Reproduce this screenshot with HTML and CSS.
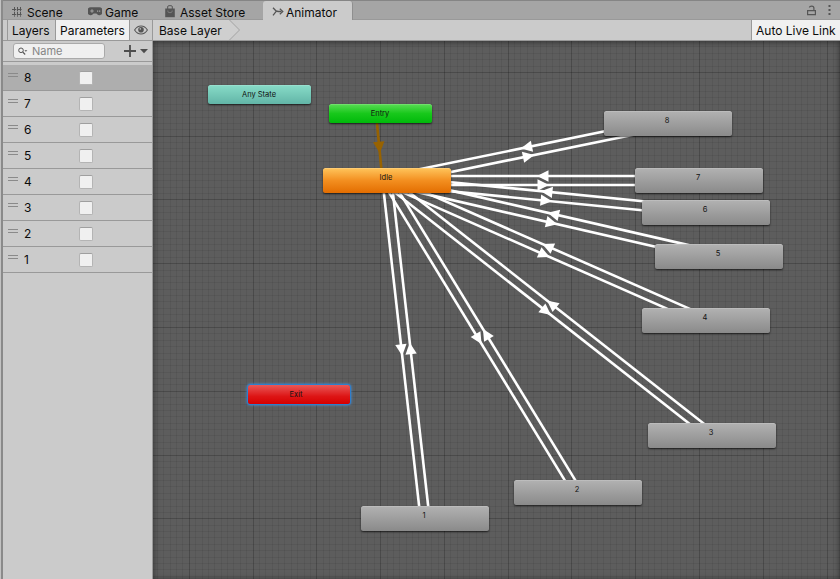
FILE: index.html
```html
<!DOCTYPE html>
<html lang="en">
<head>
<meta charset="utf-8">
<title>Animator</title>
<link rel="stylesheet" href="styles.css">
</head>
<body>
<div class="window">
  <nav class="tabs">
    <div class="tab tab-scene"><svg width="12" height="12" viewBox="0 0 12 12"><path d="M3.500 1v10M6.500 1v10M9.500 1v10M1 3.500h10M1 8.500h10" stroke="#555" stroke-width="1" stroke-dasharray="4 .7" fill="none"/></svg><span>Scene</span></div>
    <div class="tab tab-game"><svg width="14" height="9" viewBox="0 0 14 9"><path fill="#555" fill-rule="evenodd" d="M4 .3h6a4 4 0 0 1 1.500 8C10 8.600 9 7 8.400 6.500H5.600C5 7 4 8.600 2.500 8.300A4 4 0 0 1 4 .3ZM3.500 2.300v1.200H2.300v1h1.200v1.200h1V4.500h1.200v-1H4.500V2.300ZM9 3.500v1.200h1.200V3.500ZM11 3.500v1.200h1.200V3.500Z"/></svg><span>Game</span></div>
    <div class="tab tab-store"><svg width="10" height="13" viewBox="0 0 10 13"><path d="M2.700 4V2q0-1.300 1-1.300h2.600q1 0 1 1.300v2" fill="none" stroke="#555"/><path d="M.2 3.500h9.600V12.200H.2Z" fill="#555"/><path d="M2.800 5.500v.6q0 1.600 2.200 1.600t2.200-1.600v-.6" fill="none" stroke="#888" stroke-width=".8"/></svg><span>Asset Store</span></div>
    <div class="tab tab-animator"><svg width="12" height="10" viewBox="0 0 12 10"><path d="M1 .8 3.600 3.500Q4.700 4.500 6.500 4.500H9.500M1 8.300 4 4.600" fill="none" stroke="#555" stroke-width="1.300"/><path d="M7.800 1.800 10.800 4.500 7.800 7.200" fill="none" stroke="#555" stroke-width="1.200"/></svg><span>Animator</span></div>
    <div class="window-tools">
      <svg width="9" height="11" viewBox="0 0 9 11"><path d="M.6 5.600h7.800v4H.6ZM6.900 5.600V3q0-1.900-2.200-1.900T2.400 2.500" fill="none" stroke="#555" stroke-width="1.200"/></svg>
      <svg width="3" height="12" viewBox="0 0 3 12"><path d="M.5 1h2v2h-2ZM.5 5h2v2h-2ZM.5 9h2v2h-2Z" fill="#555"/></svg>
    </div>
  </nav>
  <div class="toolbar">
    <div class="panel-tabs">
      <div class="layers">Layers</div><div class="parameters">Parameters</div>
      <div class="eye"><svg width="14" height="10" viewBox="0 0 14 10"><path d="M.6 5Q3 1 7 1t6.400 4Q11 9 7 9T.6 5Z" fill="none" stroke="#555" stroke-width="1.100"/><circle cx="7" cy="4.700" r="2.800" fill="#555"/><circle cx="6.300" cy="3.900" r=".8" fill="#bbb"/></svg></div>
    </div>
    <div class="breadcrumb"><span>Base Layer</span><svg width="13" height="20" viewBox="0 0 13 20"><path d="M0 0h1l10 10L1 20H0Z" fill="#cfcfcf"/><path d="M.5 0 10.500 10 .5 20" fill="none" stroke="#a2a2a2"/></svg></div>
    <div class="live-link">Auto Live Link</div>
  </div>
  <main class="workspace">
    <aside class="sidebar">
      <div class="search-row">
        <div class="search"><svg width="10" height="9" viewBox="0 0 10 9"><circle cx="3" cy="3.300" r="2.300" fill="none" stroke="#555"/><path d="m4.700 5 2.500 2.500" stroke="#555" stroke-width="1.100"/><path d="M6.400 3.200h3L7.900 4.800Z" fill="#555"/></svg><span>Name</span></div>
        <svg class="add" width="26" height="12" viewBox="0 0 26 12"><path d="M6 0v12M0 6h12" stroke="#4d4d4d" stroke-width="1.800"/><path d="M16 4h8l-4 4.300Z" fill="#4d4d4d"/></svg>
      </div>
      <div class="param selected"><i></i><span>8</span><b></b></div>
      <div class="param"><i></i><span>7</span><b></b></div>
      <div class="param"><i></i><span>6</span><b></b></div>
      <div class="param"><i></i><span>5</span><b></b></div>
      <div class="param"><i></i><span>4</span><b></b></div>
      <div class="param"><i></i><span>3</span><b></b></div>
      <div class="param"><i></i><span>2</span><b></b></div>
      <div class="param"><i></i><span>1</span><b></b></div>
    </aside>
    <section class="graph">
      <svg class="wires" id="wires" width="687" height="538" viewBox="153 41 687 538"></svg>
      <div class="node any">Any State</div>
      <div class="node entry">Entry</div>
      <div class="node idle">Idle</div>
      <div class="node exit">Exit</div>
      <div class="node state s8">8</div>
      <div class="node state s7">7</div>
      <div class="node state s6">6</div>
      <div class="node state s5">5</div>
      <div class="node state s4">4</div>
      <div class="node state s3">3</div>
      <div class="node state s2">2</div>
      <div class="node state s1">1</div>
    </section>
  </main>
</div>
<script src="graph.js"></script>
</body>
</html>
```
FILE: styles.css
```css
* { box-sizing: border-box; }
body { margin: 0; font-family: Inter, "Liberation Sans", sans-serif; font-size: 12px; color: #0b0b0b; }
svg { display: block; flex: none; }
.window { width: 840px; height: 579px; overflow: hidden; display: flex; flex-direction: column; background: #cbcbcb; border-left: 1px solid #c2c2c2; box-shadow: inset 2px 0 #8a8a8a; padding-left: 2px; }
.tabs { height: 20px; flex: none; display: flex; background: #a5a5a5; border-top: 1px solid #858585; border-bottom: 1px solid #999; }
.tab { display: flex; align-items: center; height: 19px; padding-top: 3px; white-space: nowrap; }
.tab-scene { width: 85px; padding-left: 8px; gap: 4px; }
.tab-game { width: 77px; gap: 3px; }
.tab-store { width: 98px; gap: 5px; }
.tab-animator { width: 90px; padding-left: 9px; gap: 2px; background: #cbcbcb; border-radius: 3px 3px 0 0; border-right: 1px solid #8f8f8f; }
.tab svg { margin-top: -1px; }
.window-tools { margin-left: auto; display: flex; align-items: center; gap: 12px; padding-right: 9px; }
.toolbar { height: 21px; flex: none; display: flex; line-height: 22px; border-bottom: 1px solid #999; white-space: nowrap; }
.panel-tabs { width: 150px; display: flex; padding-left: 4px; border-right: 1px solid #999; }
.layers { width: 48px; border-left: 1px solid #999; padding-left: 4px; }
.parameters { width: 75px; padding-left: 4px; background: #f0f0f0; border: solid #999; border-width: 0 1px; }
.eye { display: flex; align-items: center; padding-left: 4px; }
.breadcrumb { display: flex; background: linear-gradient(#cfcfcf, #cfcfcf) 0 0 / 76px 100% no-repeat; padding-left: 6px; }
.breadcrumb span { width: 70px; }
.live-link { margin-left: auto; width: 89px; padding-left: 4px; background: #f0f0f0; border-left: 1px solid #999; }
.workspace { flex: 1; display: flex; }
.sidebar { width: 150px; flex: none; border-right: 1px solid #999; }
.search-row { height: 21px; display: flex; align-items: flex-start; padding: 2px 0 0 10px; border-bottom: 1px solid #999; margin-bottom: 3px; }
.search { width: 92px; height: 16px; display: flex; align-items: center; gap: 4px; padding-left: 4px; background: #f0f0f0; border: 1px solid #aaa; border-radius: 3px; color: #858585; font-size: 11px; }
.add { margin: 2px 0 0 19px; }
.param { height: 26px; display: flex; align-items: center; border-bottom: 1px solid #999; padding-left: 5px; }
.param i { width: 10px; height: 4px; border: solid #8a8a8a; border-width: 1px 0; margin-top: -5px; }
.param span { width: 55px; margin-left: 6px; }
.param b { width: 14px; height: 14px; background: #f0f0f0; border: 1px solid #b4b4b4; border-top-color: #9f9f9f; border-radius: 2px; margin-top: 1px; }
.selected { background: #aeaeae; }
.graph { position: relative; flex: 1; background: #5d5d5d; overflow: hidden; }
.graph::after { content: ""; position: absolute; inset: 0; box-shadow: inset 0 1px 6px rgba(0,0,0,.5); }
.wires { position: absolute; left: 0; top: 0; }
.node { position: absolute; width: 103px; height: 19px; padding: 5px 1px 0 0; border-radius: 2.500px; text-align: center; font-size: 7.500px; line-height: 9px; color: #111; box-shadow: 0 1px 2px rgba(0,0,0,.7), inset 0 1px rgba(255,255,255,.15); }
.any { left: 55px; top: 44px; background: linear-gradient(#88dcc8, #62b5a7); }
.entry { left: 176px; top: 63px; background: linear-gradient(#5adc55, #18c81b 50%, #00b90b); }
.exit { left: 95px; top: 344px; width: 102px; padding-right: 6px; background: linear-gradient(#e95757, #dd1515 60%, #d60000); box-shadow: 0 0 1px 1px #2b80d0, 0 0 3px 1px #4a90d9; }
.idle, .state { width: 128px; height: 25px; padding-right: 2px; }
.idle { left: 170px; top: 127px; background: linear-gradient(#ffc55c, #f38f20 50%, #e36d00); }
.state { background: linear-gradient(#b2b2b2, #8a8a8a); }
.s8 { left: 451px; top: 70px; }
.s7 { left: 482px; top: 127px; }
.s6 { left: 489px; top: 159px; }
.s5 { left: 502px; top: 203px; }
.s4 { left: 489px; top: 267px; }
.s3 { left: 495px; top: 382px; }
.s2 { left: 361px; top: 439px; }
.s1 { left: 208px; top: 465px; }
```
FILE: graph.js
```js
// Draws the canvas grid and the transitions between states.
const svg = document.getElementById("wires");
const add = (tag, attrs) => {
  const el = document.createElementNS("http://www.w3.org/2000/svg", tag);
  for (const key in attrs) el.setAttribute(key, attrs[key]);
  svg.appendChild(el);
};
const step = 6.3775;
for (let i = -6; i < 104; i++) {
  const x = Math.floor(189.3 + i * step);
  add("rect", { x, y: 41, width: 1, height: 538, fill: "#000", opacity: i % 10 ? 0.06 : 0.2 });
}
for (let i = -5; i < 80; i++) {
  const y = Math.floor(72.4 + i * step);
  add("rect", { x: 153, y, width: 687, height: 1, fill: "#000", opacity: i % 10 ? 0.06 : 0.2 });
}
function transition(from, to, color) {
  const dx = to[0] - from[0], dy = to[1] - from[1], len = Math.hypot(dx, dy);
  const angle = Math.atan2(dy, dx) * 180 / Math.PI;
  const transform = `translate(${from[0]} ${from[1]}) rotate(${angle})`;
  const m = len / 2;
  add("path", { d: `M0 4.5H${len}`, stroke: color, "stroke-width": 2.6, transform });
  add("path", { d: `M${m - 5.5} -1.2V10.2L${m + 6} 4.5Z`, fill: color, transform });
}
const idle = [387, 180.5];
transition([380.5, 113], idle, "#976200");
const states = [[668, 123], [699, 180.5], [706, 212], [718, 256.5], [705, 320.5], [711, 435], [577.5, 492.5], [425, 518]];
for (const state of states) {
  transition(idle, state, "#fff");
  transition(state, idle, "#fff");
}
```
